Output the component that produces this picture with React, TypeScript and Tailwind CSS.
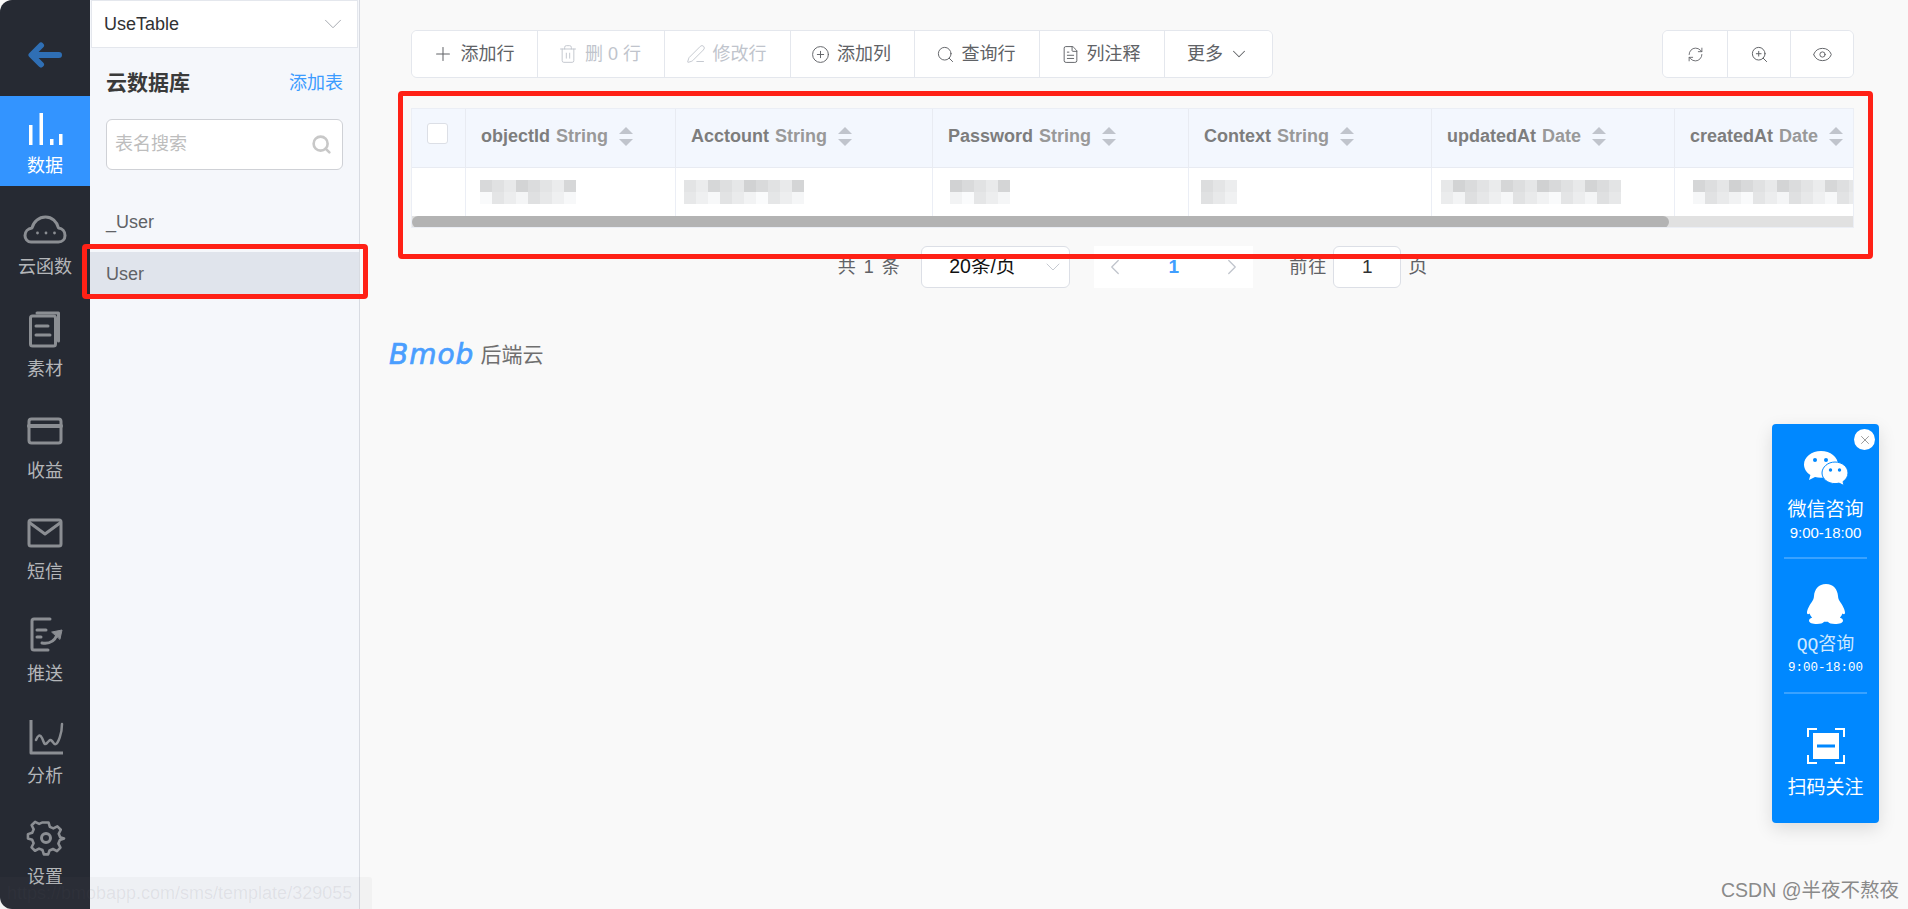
import { Plus, Trash2, PenLine, CirclePlus, Search, FileText, ChevronDown, ChevronLeft, ChevronRight, RefreshCw, ZoomIn, Eye, X } from "lucide-react";

const ICON = "stroke-[#8b8e93]";

function NavIcon({ name }: { name: string }) {
  const common = { width: 44, height: 44, viewBox: "0 0 44 44", fill: "none", strokeWidth: 3, strokeLinecap: "round" as const, strokeLinejoin: "round" as const, className: ICON };
  if (name === "cloud")
    return (
      <svg {...common}>
        <path d="M8 36c-4 0-6-3.500-6-6.500 0-4 3-7 7-7.500C10.500 15.500 16 11 22.500 11s11.500 4.500 13 11c4 .5 6.500 3.500 6.500 7.500 0 3.500-2.500 6.500-6.500 6.500Z" />
        <circle cx="14.500" cy="27" r="1.400" fill="#8b8e93" stroke="none" />
        <circle cx="23" cy="27" r="1.400" fill="#8b8e93" stroke="none" />
        <circle cx="31.500" cy="27" r="1.400" fill="#8b8e93" stroke="none" />
      </svg>
    );
  if (name === "doc")
    return (
      <svg {...common}>
        <rect x="7.500" y="8" width="25" height="30" rx="2" />
        <path d="M13 18h12M13 27h14M14 5h21.500v28" />
      </svg>
    );
  if (name === "card")
    return (
      <svg {...common}>
        <rect x="6" y="9" width="32" height="24" rx="2.500" />
        <path d="M6 16h32" strokeWidth="4" />
      </svg>
    );
  if (name === "mail")
    return (
      <svg {...common}>
        <rect x="6" y="9" width="32" height="26" rx="2" />
        <path d="M7 12l15 11 15-11" />
      </svg>
    );
  if (name === "push")
    return (
      <svg {...common}>
        <path d="M27 6H11a2 2 0 0 0-2 2v27a2 2 0 0 0 2 2h14M14 17h9M14 24h4" />
        <path d="M19 30c6 1 12-1 15-8" />
        <path d="M29 19l10-2-2 9z" fill="#8b8e93" strokeWidth="1" />
      </svg>
    );
  if (name === "chart")
    return (
      <svg {...common}>
        <path d="M8 5v33h32" strokeLinecap="butt" />
        <path d="M13 25c2-5 4-6 6-2s2 8 5 5 3-4 5-2 2 4 4 3 6-10 6-20" strokeWidth="2.500" />
      </svg>
    );
  return (
    <svg {...common}>
      <path d="M19 6h6l1.500 5 4 1.800 4.700-2.400 4 4-2.400 4.700 1.700 4L43 24.500v0l-5 2-1.600 4 2.400 4.700-4 4-4.700-2.400-4 1.700L24.500 43h-5l-1.600-5-4-1.600-4.700 2.400-4-4 2.400-4.700-1.700-4L1 24.500v-5l5-1.600 1.700-4-2.400-4.700 4-4 4.700 2.400 4-1.700Z" transform="translate(23 22) scale(.86) translate(-22 -24)" />
      <circle cx="23" cy="22" r="4.500" />
    </svg>
  );
}

function NavItem({ icon, label }: { icon: string; label: string }) {
  return (
    <div className="h-[102px] flex flex-col items-center pt-[9px]">
      <div className="h-[44px] flex items-center justify-center"><NavIcon name={icon} /></div>
      <div className="mt-[4px] text-[18px] leading-[26px] text-[#b4b6b9]">{label}</div>
    </div>
  );
}

function ToolButton({ w, label, disabled, children }: { w: string; label?: string; disabled?: boolean; children?: React.ReactNode }) {
  return (
    <div className={`${w} h-full flex items-center justify-center gap-[7px] ${label ? "pr-[3px]" : ""} bg-white border-l border-[#e4e7ed] first:border-l-0 text-[18px] ${disabled ? "text-[#c0c4cc]" : "text-[#606266]"}`}>
      {children}
      {label && <span>{label}</span>}
    </div>
  );
}

function Caret() {
  return (
    <span className="flex flex-col gap-[5px] ml-[11px]">
      <span className="w-0 h-0 border-x-[7px] border-x-transparent border-b-[7px] border-b-[#c0c4cc]" />
      <span className="w-0 h-0 border-x-[7px] border-x-transparent border-t-[7px] border-t-[#c0c4cc]" />
    </span>
  );
}

function Mosaic({ n, seed, ml }: { n: number; seed: number; ml: string }) {
  const cell = (i: number, row: number) => {
    const v = (row === 0 ? 208 : 222) + (((i + seed) * 37 + row * 19) % 29);
    return `rgb(${v},${v + 1},${v + 2})`;
  };
  return (
    <div className={`${ml} grid grid-rows-2 grid-flow-col auto-cols-[12px] h-[24px]`}>
      {Array.from({ length: n }).flatMap((_, i) => [
        <div key={`a${i}`} style={{ background: cell(i, 0) }} />,
        <div key={`b${i}`} style={{ background: cell(i, 1) }} />,
      ])}
    </div>
  );
}

const COLS = [
  { w: "w-[210px]", name: "objectId", type: "String", n: 8, ml: "ml-[14px]" },
  { w: "w-[257px]", name: "Acctount", type: "String", n: 10, ml: "ml-[8px]" },
  { w: "w-[256px]", name: "Password", type: "String", n: 5, ml: "ml-[17px]" },
  { w: "w-[243px]", name: "Context", type: "String", n: 3, ml: "ml-[12px]" },
  { w: "w-[243px]", name: "updatedAt", type: "Date", n: 15, ml: "ml-[9px]" },
  { w: "w-[180px]", name: "createdAt", type: "Date", n: 14, ml: "ml-[18px]" },
];

export default function App() {
  return (
    <div className="relative w-[1908px] h-[909px] overflow-hidden flex bg-[#f9f9f9] font-['Liberation_Sans','Noto_Sans_CJK_SC',sans-serif]">
      {/* Nav */}
      <div className="w-[90px] shrink-0 bg-[#262a33] rounded-l-[12px] flex flex-col">
        <div className="h-[96px] flex items-center justify-center pt-[14px]">
          <svg width="34" height="26" viewBox="0 0 34 26" fill="none" stroke="#2f6fb5" strokeWidth="6" strokeLinecap="round" strokeLinejoin="round">
            <path d="M31 13H5M13 3.500 3.500 13 13 22.500" />
          </svg>
        </div>
        <div className="h-[102px]">
          <div className="h-[90px] bg-[#3394ff] flex flex-col items-center pt-[15px]">
            <svg width="36" height="36" viewBox="0 0 36 36" fill="#fff">
              <rect x="2" y="14" width="3.500" height="20" />
              <rect x="12.500" y="2" width="3.500" height="32" />
              <rect x="23" y="28" width="3.500" height="6" />
              <rect x="32" y="23" width="3.500" height="11" />
            </svg>
            <div className="mt-[6px] text-[18px] leading-[26px] text-white">数据</div>
          </div>
        </div>
        <NavItem icon="cloud" label="云函数" />
        <NavItem icon="doc" label="素材" />
        <NavItem icon="card" label="收益" />
        <NavItem icon="mail" label="短信" />
        <NavItem icon="push" label="推送" />
        <NavItem icon="chart" label="分析" />
        <NavItem icon="gear" label="设置" />
      </div>

      {/* Table list */}
      <div className="w-[270px] shrink-0 bg-[#f5f7fb] border-r border-[#d8dbe2] flex flex-col">
        <div className="h-[48px] mx-[1px] bg-white border border-[#e4e7ed] flex items-center justify-between pl-[12px] pr-[9px]">
          <span className="text-[18px] text-[#303133]">UseTable</span>
          <ChevronDown size={30} strokeWidth={0.8} className="text-[#a8abb2]" />
        </div>
        <div className="mt-[21px] pl-[16px] pr-[16px] flex items-center justify-between h-[28px]">
          <span className="text-[21px] font-bold text-[#3a3a3a]">云数据库</span>
          <span className="text-[18px] text-[#3c9bff]">添加表</span>
        </div>
        <div className="mt-[22px] mx-[16px] h-[51px] bg-white border border-[#cfd1d6] rounded-[6px] flex items-center justify-between pl-[8px] pr-[10px]">
          <span className="text-[18px] text-[#bdbdbd]">表名搜索</span>
          <Search size={21} strokeWidth={3} className="text-[#c8c8c8]" />
        </div>
        <div className="mt-[31px] h-[42px] pl-[16px] flex items-center text-[18px] text-[#606266]">_User</div>
        <div className="mt-[9px] h-[44px] pl-[16px] flex items-center text-[18px] text-[#606266] bg-[#e0e4ec]">User</div>
      </div>

      {/* Main */}
      <div className="flex-1 min-w-0 pl-[51px] pr-[54px] pt-[30px]">
        <div className="h-[48px] flex justify-between">
          <div className="flex h-full border border-[#e4e7ed] rounded-[6px] overflow-hidden">
            <ToolButton w="w-[125px]" label="添加行"><Plus size={22} strokeWidth={1.1} /></ToolButton>
            <ToolButton w="w-[127px]" label="删 0 行" disabled><Trash2 size={20} strokeWidth={1.1} /></ToolButton>
            <ToolButton w="w-[126px]" label="修改行" disabled><PenLine size={20} strokeWidth={1.1} /></ToolButton>
            <ToolButton w="w-[124px]" label="添加列"><CirclePlus size={19} strokeWidth={1.2} /></ToolButton>
            <ToolButton w="w-[125px]" label="查询行"><Search size={19} strokeWidth={1.2} /></ToolButton>
            <ToolButton w="w-[125px]" label="列注释"><FileText size={19} strokeWidth={1.2} /></ToolButton>
            <div className="w-[108px] h-full flex items-center justify-center gap-[5px] bg-white border-l border-[#e4e7ed] text-[18px] text-[#606266]">
              <span>更多</span><ChevronDown size={22} strokeWidth={1.1} />
            </div>
          </div>
          <div className="flex h-full border border-[#e4e7ed] rounded-[6px] overflow-hidden">
            <ToolButton w="w-[64px]"><RefreshCw size={17} strokeWidth={1.25} /></ToolButton>
            <ToolButton w="w-[63px]"><ZoomIn size={19} strokeWidth={1.25} /></ToolButton>
            <ToolButton w="w-[63px]"><Eye size={21} strokeWidth={1.1} /></ToolButton>
          </div>
        </div>

        {/* Table */}
        <div className="mt-[30px] h-[120px] border border-[#ebeef5] overflow-hidden flex flex-col">
          <div className="flex h-[59px] shrink-0 bg-[#f3f7fe] border-b border-[#e8ebf2]">
            <div className="w-[54px] shrink-0 flex items-center justify-center pb-[9px] pr-[3px] border-r border-[#e8ebf2]">
              <div className="w-[21px] h-[21px] bg-white border border-[#dcdfe6] rounded-[3px]" />
            </div>
            {COLS.map((c, i) => (
              <div key={c.name} className={`${c.w} shrink-0 flex items-center pl-[15px] pb-[3px] text-[18px] font-bold whitespace-nowrap ${i < 5 ? "border-r border-[#e8ebf2]" : ""}`}>
                <span className="text-[#7d7d7d]">{c.name}</span>
                <span className="text-[#999999] ml-[6px]">{c.type}</span>
                <Caret />
              </div>
            ))}
          </div>
          <div className="flex h-[48px] shrink-0 bg-white">
            <div className="w-[54px] shrink-0 border-r border-[#ebeef5]" />
            {COLS.map((c, i) => (
              <div key={c.name} className={`${c.w} shrink-0 flex items-center overflow-hidden ${i < 5 ? "border-r border-[#ebeef5]" : ""}`}>
                <Mosaic n={c.n} seed={i * 5 + 1} ml={c.ml} />
              </div>
            ))}
          </div>
          <div className="h-[12px] shrink-0 bg-[#e1e1e1]">
            <div className="w-[1257px] h-full bg-[#b3b3b3] rounded-[6px]" />
          </div>
        </div>

        {/* Pagination */}
        <div className="mt-[18px] h-[42px] flex items-center justify-center text-[18px] text-[#606266]">
          <span className="whitespace-pre tracking-[1.5px]">共 1 条</span>
          <div className="ml-[20px] w-[149px] h-full bg-white border border-[#dcdfe6] rounded-[6px] flex items-center pl-[27px] pr-[4px] justify-between text-[19.500px] text-[#111]">
            <span>20条/页</span>
            <ChevronDown size={24} strokeWidth={0.9} className="text-[#c0c4cc]" />
          </div>
          <div className="ml-[24px] w-[159px] h-full bg-white flex items-center justify-between px-[8px]">
            <ChevronLeft size={26} strokeWidth={1.2} className="text-[#c0c4cc]" />
            <span className="font-bold text-[19px] text-[#409eff]">1</span>
            <ChevronRight size={26} strokeWidth={1.2} className="text-[#c0c4cc]" />
          </div>
          <span className="ml-[36px] tracking-[1px]">前往</span>
          <div className="ml-[6px] w-[68px] h-full bg-white border border-[#dcdfe6] rounded-[6px] flex items-center justify-center text-[19px] text-[#303133]">1</div>
          <span className="ml-[7px] text-[19px]">页</span>
        </div>

        {/* Logo */}
        <div className="mt-[51px] -ml-[22px] h-[32px] flex items-center gap-[6px]">
          <span className="font-['DejaVu_Sans',sans-serif] italic text-[28px] tracking-[1px] text-[#4a9eff] [-webkit-text-stroke:0.7px_#4a9eff]">Bmob</span>
          <span className="text-[21px] text-[#6f6f6f]">后端云</span>
        </div>
      </div>

      {/* Red annotation boxes */}
      <div className="absolute left-[82px] top-[244px] w-[286px] h-[55px] border-[5px] border-[#ff2116] rounded-[4px]" />
      <div className="absolute left-[398px] top-[91px] w-[1475px] h-[168px] border-[5px] border-[#ff2116] rounded-[4px]" />

      {/* Floating contact widget */}
      <div className="absolute left-[1772px] top-[424px] w-[107px] h-[399px] bg-[#0088ff] rounded-[4px] shadow-[0_6px_18px_rgba(0,0,0,0.12)] flex flex-col items-center text-white">
        <div className="absolute right-[4px] top-[5px] w-[21px] h-[21px] rounded-full bg-white flex items-center justify-center">
          <X size={14} strokeWidth={1.25} className="text-[#777]" />
        </div>
        <div className="h-[133px] w-full flex flex-col items-center pt-[27px]">
          <svg width="44" height="36" viewBox="0 0 44 36">
            <path d="M17 0C7.600 0 0 6 0 13.500c0 4.300 2.500 8 6.400 10.500L5 29l6-3c1.900.5 4 .8 6 .8 9.400 0 17-6 17-13.300S26.400 0 17 0Z" fill="#fff" />
            <circle cx="11" cy="9" r="2" fill="#0088ff" />
            <circle cx="22" cy="9" r="2" fill="#0088ff" />
            <path d="M31 11c7.200 0 13 4.900 13 11 0 3.500-2 6.600-5 8.600l1 4-5-2.500c-1.300.3-2.600.5-4 .5-7.200 0-13-4.800-13-10.600S23.800 11 31 11Z" fill="#fff" stroke="#0088ff" strokeWidth="1" />
            <circle cx="26.500" cy="19" r="1.700" fill="#0088ff" />
            <circle cx="35.500" cy="19" r="1.700" fill="#0088ff" />
          </svg>
          <div className="mt-[10px] text-[19px] leading-[26px]">微信咨询</div>
          <div className="text-[15px] leading-[20px]">9:00-18:00</div>
        </div>
        <div className="w-[83px] h-[2px] shrink-0 bg-[#3aa2ff]" />
        <div className="h-[133px] w-full flex flex-col items-center pt-[25px]">
          <svg width="38" height="40" viewBox="0 0 38 40" fill="#fff">
            <path d="M19 0c7.500 0 11.500 5.500 12 12 .2 2.500.8 4 2.200 6 2.300 3.200 4.800 7.800 4.800 10.500 0 1.800-1 2.300-2.500 1-.6 1.500-1.500 3-2.700 4 2 .8 3.200 1.800 3.200 3.200 0 2-3.500 3.300-8 3.300-3.500 0-6.200-1-7-2.300h-4c-.8 1.300-3.500 2.300-7 2.300-4.500 0-8-1.300-8-3.300 0-1.400 1.200-2.400 3.200-3.200-1.200-1-2.100-2.500-2.700-4-1.500 1.300-2.500.8-2.500-1 0-2.700 2.500-7.300 4.800-10.500C6.200 16 6.800 14.500 7 12 7.500 5.500 11.500 0 19 0Z" />
          </svg>
          <div className="mt-[8px] font-['Liberation_Mono','Noto_Sans_CJK_SC',monospace] text-[18px] leading-[26px] text-[#cfe8ff]">QQ咨询</div>
          <div className="font-['Liberation_Mono',monospace] text-[12.500px] leading-[20px]">9:00-18:00</div>
        </div>
        <div className="w-[83px] h-[2px] shrink-0 bg-[#3aa2ff]" />
        <div className="flex-1 w-full flex flex-col items-center pt-[33px]">
          <svg width="38" height="38" viewBox="0 0 38 38" fill="none">
            <path d="M1 10V2h9M28 2h9v8M37 28v8h-9M10 36H1v-8" stroke="#fff" strokeWidth="2" />
            <rect x="6" y="6" width="26" height="26" fill="#fff" />
            <rect x="10" y="17.500" width="18" height="3" fill="#0088ff" />
          </svg>
          <div className="mt-[10px] text-[19px] leading-[26px]">扫码关注</div>
        </div>
      </div>

      {/* Status-bar URL overlay */}
      <div className="absolute left-0 bottom-0 w-[372px] h-[32px] bg-[rgba(120,120,120,0.05)] rounded-tr-[3px] flex items-center pl-[7px] text-[18px] text-[rgba(90,90,100,0.1)]">
        https://bmobapp.com/sms/template/329055
      </div>

      {/* Watermark */}
      <div className="absolute right-[9px] bottom-[7px] text-[19.500px] leading-[24px] text-[#8a8a8a]">CSDN @半夜不熬夜</div>
    </div>
  );
}
